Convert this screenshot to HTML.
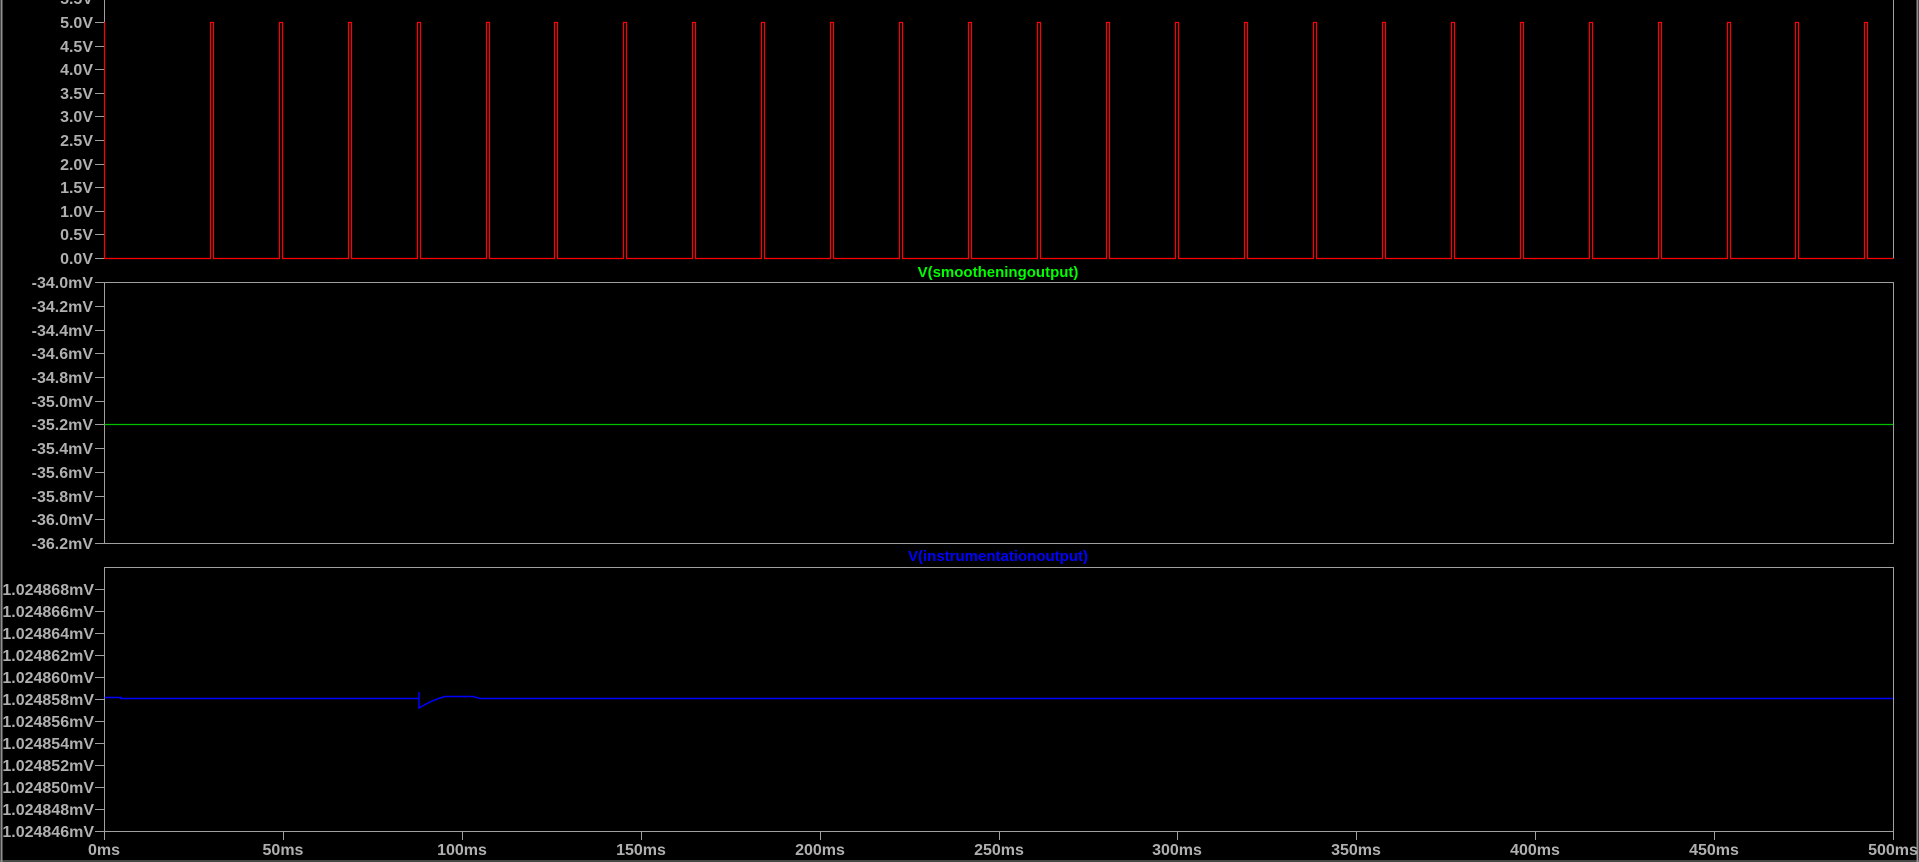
<!DOCTYPE html>
<html><head><meta charset="utf-8"><style>
html,body{margin:0;padding:0;background:#000;width:1919px;height:862px;overflow:hidden}
svg{display:block}
text{font-family:"Liberation Sans",Arial,sans-serif;font-weight:bold;font-size:16px;fill:#b0b0b0}
.yl{text-anchor:end}
.xl{text-anchor:middle}
</style></head><body>
<svg width="1919" height="862" viewBox="0 0 1919 862" xmlns="http://www.w3.org/2000/svg">
<rect x="0" y="0" width="1919" height="862" fill="#000"/>
<line x1="1.5" y1="0" x2="1.5" y2="862" stroke="#909090" stroke-width="2"/>
<line x1="1917.5" y1="0" x2="1917.5" y2="862" stroke="#909090" stroke-width="2"/>
<line x1="0" y1="861" x2="1919" y2="861" stroke="#909090" stroke-width="1"/>

<g stroke="#a0a0a0" stroke-width="1" fill="none">
<path d="M104.5 0 V258.5 M1893.5 0 V258.5"/>
<rect x="104.5" y="282.5" width="1789" height="261"/>
<rect x="104.5" y="567.5" width="1789" height="264"/>
<path d="M95 22.5H104M95 46.5H104M95 69.5H104M95 93.5H104M95 116.5H104M95 140.5H104M95 164.5H104M95 187.5H104M95 211.5H104M95 234.5H104M95 258.5H104"/>
<path d="M95 282.5H104M95 306.5H104M95 330.5H104M95 353.5H104M95 377.5H104M95 401.5H104M95 424.5H104M95 448.5H104M95 472.5H104M95 496.5H104M95 519.5H104M95 543.5H104"/>
<path d="M95 589.5H104M95 611.5H104M95 633.5H104M95 655.5H104M95 677.5H104M95 699.5H104M95 721.5H104M95 743.5H104M95 765.5H104M95 787.5H104M95 809.5H104M95 831.5H104"/>
<path d="M104.5 831V840M283.5 831V840M462.5 831V840M641.5 831V840M820.5 831V840M999.5 831V840M1177.5 831V840M1356.5 831V840M1535.5 831V840M1714.5 831V840M1893.5 831V840"/>
</g>

<g>
<text class="yl" x="93" y="4">5.5V</text>
<text class="yl" x="93" y="28">5.0V</text>
<text class="yl" x="93" y="52">4.5V</text>
<text class="yl" x="93" y="75">4.0V</text>
<text class="yl" x="93" y="99">3.5V</text>
<text class="yl" x="93" y="122">3.0V</text>
<text class="yl" x="93" y="146">2.5V</text>
<text class="yl" x="93" y="170">2.0V</text>
<text class="yl" x="93" y="193">1.5V</text>
<text class="yl" x="93" y="217">1.0V</text>
<text class="yl" x="93" y="240">0.5V</text>
<text class="yl" x="93" y="264">0.0V</text>
<text class="yl" x="93" y="288">-34.0mV</text>
<text class="yl" x="93" y="312">-34.2mV</text>
<text class="yl" x="93" y="336">-34.4mV</text>
<text class="yl" x="93" y="359">-34.6mV</text>
<text class="yl" x="93" y="383">-34.8mV</text>
<text class="yl" x="93" y="407">-35.0mV</text>
<text class="yl" x="93" y="430">-35.2mV</text>
<text class="yl" x="93" y="454">-35.4mV</text>
<text class="yl" x="93" y="478">-35.6mV</text>
<text class="yl" x="93" y="502">-35.8mV</text>
<text class="yl" x="93" y="525">-36.0mV</text>
<text class="yl" x="93" y="549">-36.2mV</text>
<text class="yl" x="94" y="595">1.024868mV</text>
<text class="yl" x="94" y="617">1.024866mV</text>
<text class="yl" x="94" y="639">1.024864mV</text>
<text class="yl" x="94" y="661">1.024862mV</text>
<text class="yl" x="94" y="683">1.024860mV</text>
<text class="yl" x="94" y="705">1.024858mV</text>
<text class="yl" x="94" y="727">1.024856mV</text>
<text class="yl" x="94" y="749">1.024854mV</text>
<text class="yl" x="94" y="771">1.024852mV</text>
<text class="yl" x="94" y="793">1.024850mV</text>
<text class="yl" x="94" y="815">1.024848mV</text>
<text class="yl" x="94" y="837">1.024846mV</text>
</g>
<g>
<text class="xl" x="104" y="855">0ms</text>
<text class="xl" x="283" y="855">50ms</text>
<text class="xl" x="462" y="855">100ms</text>
<text class="xl" x="641" y="855">150ms</text>
<text class="xl" x="820" y="855">200ms</text>
<text class="xl" x="999" y="855">250ms</text>
<text class="xl" x="1177" y="855">300ms</text>
<text class="xl" x="1356" y="855">350ms</text>
<text class="xl" x="1535" y="855">400ms</text>
<text class="xl" x="1714" y="855">450ms</text>
<text class="xl" x="1893" y="855">500ms</text>
</g>

<text x="998" y="277" text-anchor="middle" style="fill:#00ff00;font-size:15px">V(smootheningoutput)</text>
<text x="998" y="561" text-anchor="middle" style="fill:#0000ff;font-size:15px">V(instrumentationoutput)</text>

<path fill="none" stroke="#ff0000" stroke-width="1.2" d="M104.5 22V258.5H210.5V22.5H213.5V258.5H279.5V22.5H282.5V258.5H348.5V22.5H351.5V258.5H417.5V22.5H420.5V258.5H486.5V22.5H489.5V258.5H554.5V22.5H557.5V258.5H623.5V22.5H626.5V258.5H692.5V22.5H695.5V258.5H761.5V22.5H764.5V258.5H830.5V22.5H833.5V258.5H899.5V22.5H902.5V258.5H968.5V22.5H971.5V258.5H1037.5V22.5H1040.5V258.5H1106.5V22.5H1109.5V258.5H1175.5V22.5H1178.5V258.5H1244.5V22.5H1247.5V258.5H1313.5V22.5H1316.5V258.5H1382.5V22.5H1385.5V258.5H1451.5V22.5H1454.5V258.5H1520.5V22.5H1523.5V258.5H1589.5V22.5H1592.5V258.5H1658.5V22.5H1661.5V258.5H1727.5V22.5H1730.5V258.5H1795.5V22.5H1798.5V258.5H1864.5V22.5H1867.5V258.5H1893"/>

<line x1="104.5" y1="424.5" x2="1893" y2="424.5" stroke="#00c000" stroke-width="1.2"/>

<path fill="none" stroke="#0000ff" stroke-width="1.5" d="M104.5 697.5H121V698.5H419V692V708Q432 700 445 696.5H473L480 698.5H1893"/>
</svg>
</body></html>
